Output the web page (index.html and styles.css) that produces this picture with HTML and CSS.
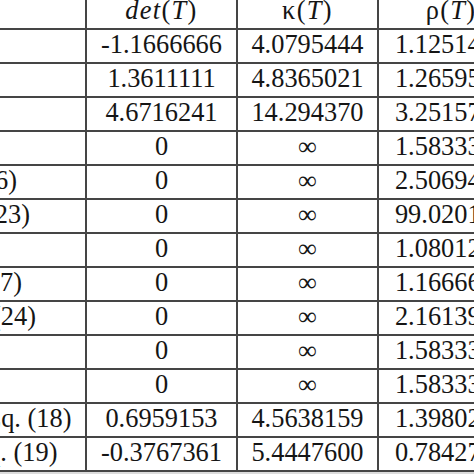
FILE: index.html
```html
<!DOCTYPE html>
<html>
<head>
<meta charset="utf-8">
<link rel="stylesheet" href="styles.css">
</head>
<body>
<div class="tbl">
  <div class="c lab hd"></div>
  <div class="c hd"><i>det</i>(<i>T</i>)</div>
  <div class="c hd">κ(<i>T</i>)</div>
  <div class="c hd">ρ(<i>T</i>)</div>

  <div class="c lab"></div>
  <div class="c">-1.1666666</div>
  <div class="c">4.0795444</div>
  <div class="c">1.1251444</div>

  <div class="c lab"></div>
  <div class="c">1.3611111</div>
  <div class="c">4.8365021</div>
  <div class="c">1.2659527</div>

  <div class="c lab"></div>
  <div class="c">4.6716241</div>
  <div class="c">14.294370</div>
  <div class="c">3.2515710</div>

  <div class="c lab"></div>
  <div class="c">0</div>
  <div class="c">∞</div>
  <div class="c">1.5833333</div>

  <div class="c lab r5"><span>Eq. (16)</span></div>
  <div class="c">0</div>
  <div class="c">∞</div>
  <div class="c">2.5069444</div>

  <div class="c lab r6"><span>Eq. (23)</span></div>
  <div class="c">0</div>
  <div class="c">∞</div>
  <div class="c">99.020123</div>

  <div class="c lab"></div>
  <div class="c">0</div>
  <div class="c">∞</div>
  <div class="c">1.0801234</div>

  <div class="c lab r8"><span>Eq. (17)</span></div>
  <div class="c">0</div>
  <div class="c">∞</div>
  <div class="c">1.1666666</div>

  <div class="c lab r9"><span>Eq. (24)</span></div>
  <div class="c">0</div>
  <div class="c">∞</div>
  <div class="c">2.1613935</div>

  <div class="c lab"></div>
  <div class="c">0</div>
  <div class="c">∞</div>
  <div class="c">1.5833333</div>

  <div class="c lab"></div>
  <div class="c">0</div>
  <div class="c">∞</div>
  <div class="c">1.5833333</div>

  <div class="c lab r12"><span>by Eq. (18)</span></div>
  <div class="c">0.6959153</div>
  <div class="c">4.5638159</div>
  <div class="c">1.3980217</div>

  <div class="c lab r13"><span>Eq. (19)</span></div>
  <div class="c">-0.3767361</div>
  <div class="c">5.4447600</div>
  <div class="c">0.7842733</div>
</div>
</body>
</html>
```

FILE: styles.css
```css
html, body {
  margin: 0;
  padding: 0;
  overflow: hidden;
  background: #dcdcdc;
}

.tbl {
  display: grid;
  grid-template-columns: 85px 149px 139px 144px;
  grid-template-rows: 28px;
  grid-auto-rows: 32px;
  gap: 2px;
  width: max-content;
  padding-bottom: 2px;
  background: #454545;
  font-family: "Liberation Serif", "Times New Roman", serif;
  font-size: 26.4px;
  color: #151515;
}

.c {
  background: #ffffff;
  line-height: 28px;
  text-align: center;
  white-space: nowrap;
  overflow: hidden;
}

.hd {
  line-height: 20px;
  padding-top: 0;
  overflow: visible;
  letter-spacing: 1.3px;
}

.c i {
  font-style: italic;
}

.lab {
  display: flex;
  justify-content: flex-end;
  text-align: right;
}

.r5 { padding-right: 68px; }
.r6 { padding-right: 55px; }
.r8 { padding-right: 63px; }
.r9 { padding-right: 49px; }
.r12 { padding-right: 13.5px; }
.r13 { padding-right: 27.5px; }
```
